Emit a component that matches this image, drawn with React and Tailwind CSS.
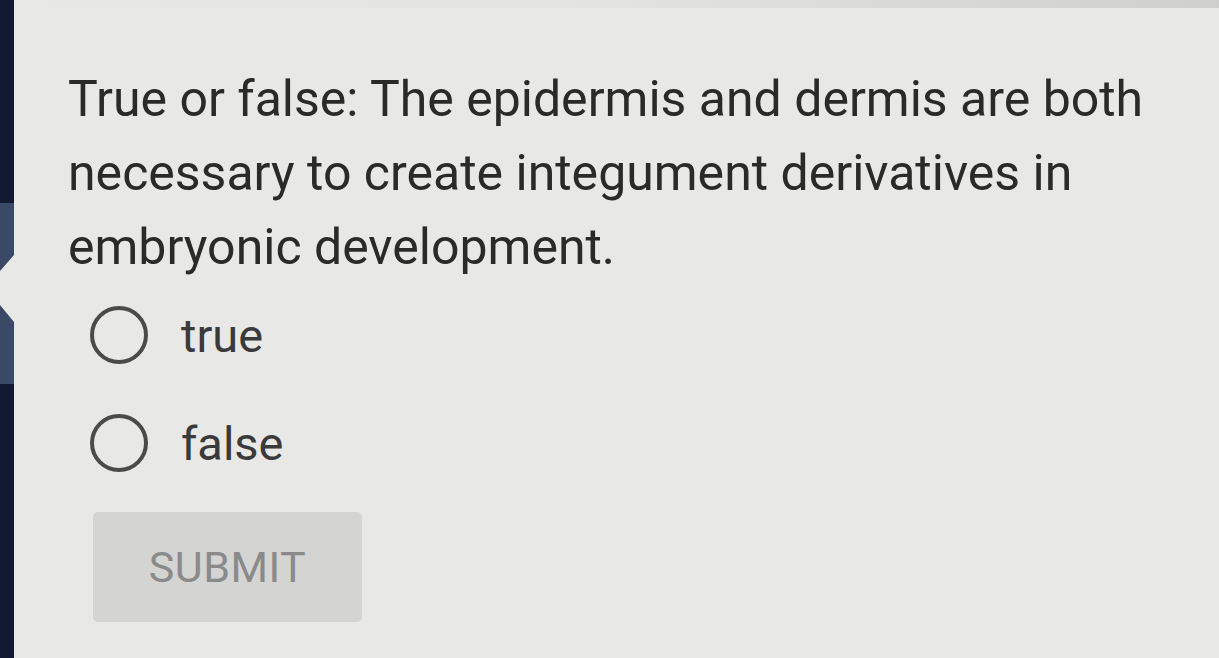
export default function App() {
  const options = ["true", "false"];
  return (
    <div
      className="flex h-[658px] w-full overflow-hidden bg-[#e8e8e6]"
      style={{ fontFamily: "Roboto, 'Noto Sans', sans-serif" }}
    >
      {/* sidebar edge with the active-item marker */}
      <div className="flex w-[14px] shrink-0 flex-col bg-[#111a31]">
        <div className="h-[203px]" />
        <div className="h-[181px] bg-[#3a4966]">
          <svg width="14" height="181" viewBox="0 0 14 181" className="block">
            <polygon points="14,52 0,68 0,102 14,119" fill="#e8e8e6" />
          </svg>
        </div>
        <div className="flex-1" />
      </div>

      <div className="flex min-w-0 flex-1 flex-col">
        <div className="h-[8px] w-full bg-gradient-to-r from-transparent via-[#e3e3e1] to-[#cfcfcd]" />
        <div className="flex flex-col pl-[54px] pt-[54px]">
          <p className="w-[1120px] text-[50px] leading-[74px] text-[#2a2a2a]">
            True or false: The epidermis and dermis are both necessary to create
            integument derivatives in embryonic development.
          </p>

          <div className="mt-[17px] flex flex-col gap-[40px] pl-[22px]">
            {options.map((o) => (
              <label key={o} className="flex h-[68px] items-center gap-[33px]">
                <span className="h-[58px] w-[58px] rounded-full border-[4px] border-[#4a4a4a]" />
                <span className="text-[47px] leading-none text-[#3a3a3a]">{o}</span>
              </label>
            ))}
          </div>

          <button className="mt-[35px] ml-[25px] flex h-[110px] w-[269px] items-center justify-center rounded-[5px] bg-[#d4d4d2] text-[43px] tracking-[0.5px] text-[#8a8a8a]">
            SUBMIT
          </button>
        </div>
      </div>
    </div>
  );
}
